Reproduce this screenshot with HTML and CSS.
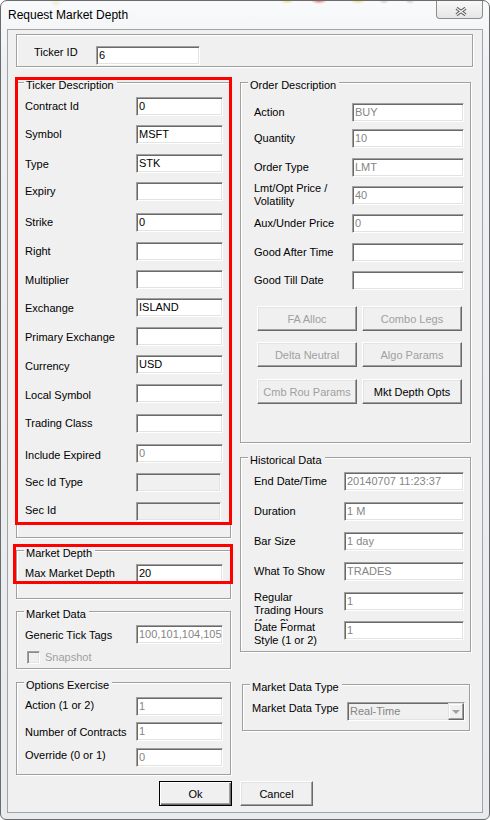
FILE: index.html
```html
<!DOCTYPE html>
<html lang="en">
<head>
<meta charset="utf-8">
<title>Request Market Depth</title>
<link rel="stylesheet" href="styles.css">
</head>
<body>
<div class="window">
  <div class="titlebar">
    <span class="title">Request Market Depth</span>
    <div class="close">
      <svg width="12" height="9" viewBox="0 0 12 9">
        <path d="M1.5 1.2 L10.5 7.8 M10.5 1.2 L1.5 7.8" stroke="#555" stroke-width="3.2" fill="none"/>
        <path d="M1.5 1.2 L10.5 7.8 M10.5 1.2 L1.5 7.8" stroke="#fafafa" stroke-width="1.3" fill="none"/>
      </svg>
    </div>
  </div>
  <div class="client">
    <div class="top-box">
      <span class="lbl-t">Ticker ID</span>
      <div class="tb tb-tid">6</div>
    </div>
    <div class="columns">
      <div class="col col-left">
        <div class="group g-td">
          <div class="gtitle">Ticker Description</div>
          <div class="fields f-td">
            <span class="lbl">Contract Id</span><div class="tb">0</div>
            <span class="lbl">Symbol</span><div class="tb">MSFT</div>
            <span class="lbl o1">Type</span><div class="tb">STK</div>
            <span class="lbl">Expiry</span><div class="tb"></div>
            <span class="lbl">Strike</span><div class="tb">0</div>
            <span class="lbl">Right</span><div class="tb"></div>
            <span class="lbl o1">Multiplier</span><div class="tb"></div>
            <span class="lbl o1">Exchange</span><div class="tb">ISLAND</div>
            <span class="lbl o1">Primary Exchange</span><div class="tb"></div>
            <span class="lbl o2">Currency</span><div class="tb">USD</div>
            <span class="lbl o2">Local Symbol</span><div class="tb"></div>
            <span class="lbl">Trading Class</span><div class="tb"></div>
            <span class="lbl o2">Include Expired</span><div class="tb ro">0</div>
            <span class="lbl">Sec Id Type</span><div class="tb dis narrow"></div>
            <span class="lbl om1">Sec Id</span><div class="tb dis narrow"></div>
          </div>
          <div class="mark mark-td"></div>
        </div>

        <div class="group g-md">
          <div class="gtitle">Market Depth</div>
          <div class="row r-md">
            <span class="lbl lw">Max Market Depth</span><div class="tb">20</div>
          </div>
          <div class="mark mark-md"></div>
        </div>

        <div class="group g-mda">
          <div class="gtitle">Market Data</div>
          <div class="row r-mda">
            <span class="lbl lw o1">Generic Tick Tags</span><div class="tb ro">100,101,104,105</div>
          </div>
          <div class="chk-row">
            <span class="chk"></span><span class="chk-lbl">Snapshot</span>
          </div>
        </div>

        <div class="group g-oe">
          <div class="gtitle">Options Exercise</div>
          <div class="fields f-oe">
            <span class="lbl om1">Action (1 or 2)</span><div class="tb ro">1</div>
            <span class="lbl o1">Number of Contracts</span><div class="tb ro">1</div>
            <span class="lbl om2">Override (0 or 1)</span><div class="tb ro">0</div>
          </div>
        </div>
      </div>

      <div class="col col-right">
        <div class="group g-od">
          <div class="gtitle">Order Description</div>
          <div class="fields f-od">
            <span class="lbl">Action</span><div class="tb ro">BUY</div>
            <span class="lbl">Quantity</span><div class="tb ro">10</div>
            <span class="lbl">Order Type</span><div class="tb ro">LMT</div>
            <span class="lbl two lmt">Lmt/Opt Price /<br>Volatility</span><div class="tb ro">40</div>
            <span class="lbl">Aux/Under Price</span><div class="tb ro">0</div>
            <span class="lbl">Good After Time</span><div class="tb"></div>
            <span class="lbl">Good Till Date</span><div class="tb"></div>
          </div>
          <div class="btn-grid">
            <div class="btn dis">FA Alloc</div>
            <div class="btn dis">Combo Legs</div>
            <div class="btn dis">Delta Neutral</div>
            <div class="btn dis">Algo Params</div>
            <div class="btn dis">Cmb Rou Params</div>
            <div class="btn">Mkt Depth Opts</div>
          </div>
        </div>

        <div class="group g-hd">
          <div class="gtitle">Historical Data</div>
          <div class="fields f-hd">
            <span class="lbl">End Date/Time</span><div class="tb ro">20140707 11:23:37</div>
            <span class="lbl">Duration</span><div class="tb ro">1 M</div>
            <span class="lbl">Bar Size</span><div class="tb ro">1 day</div>
            <span class="lbl">What To Show</span><div class="tb ro">TRADES</div>
            <span class="lbl two rth">Regular<br>Trading Hours<br>(1 or 2)</span><div class="tb ro">1</div>
            <span class="lbl two dfs">Date Format<br>Style (1 or 2)</span><div class="tb ro">1</div>
          </div>
        </div>

        <div class="group g-mdt">
          <div class="gtitle">Market Data Type</div>
          <div class="row r-mdt">
            <span class="lbl lw-mdt">Market Data Type</span>
            <div class="combo">
              <span class="combo-val">Real-Time</span>
              <span class="combo-btn"><span class="tri"></span></span>
            </div>
          </div>
        </div>
      </div>
    </div>

    <div class="actions">
      <div class="btn def">Ok</div>
      <div class="btn">Cancel</div>
    </div>
  </div>
</div>
</body>
</html>
```

FILE: styles.css
```css
* { box-sizing: border-box; }
html, body { margin: 0; padding: 0; }
body {
  width: 490px;
  height: 820px;
  overflow: hidden;
  font-family: "Liberation Sans", Arial, sans-serif;
  font-size: 11px;
  color: #000;
  background: #ffffff;
}

/* window frame */
.window {
  width: 490px;
  height: 820px;
  border: 1px solid #6b6b6b;
  border-radius: 7px 7px 6px 6px;
  background: linear-gradient(#f9fafb, #eef1f4 60px, #e8ebee);
  display: flex;
  flex-direction: column;
  overflow: hidden;
}
.titlebar {
  flex: none;
  height: 28px;
  display: flex;
  align-items: center;
  padding-left: 7px;
  background:
    radial-gradient(7px 3px at 286px 0, rgba(236, 214, 90, 0.75), transparent),
    radial-gradient(8px 3px at 318px 0, rgba(228, 84, 84, 0.75), transparent),
    radial-gradient(8px 3px at 357px 0, rgba(236, 214, 90, 0.75), transparent),
    radial-gradient(5px 3px at 383px 0, rgba(160, 160, 160, 0.5), transparent),
    radial-gradient(5px 3px at 409px 0, rgba(160, 160, 160, 0.5), transparent),
    radial-gradient(6px 4px at 55px 2px, rgba(236, 220, 150, 0.45), transparent);
}
.title {
  font-size: 12px;
  line-height: 16px;
  color: #000;
}
.close {
  align-self: flex-start;
  margin-left: auto;
  margin-right: 6px;
  width: 47px;
  height: 18px;
  border: 1px solid #8d8d8d;
  border-top: 0;
  border-radius: 0 0 4px 4px;
  background: linear-gradient(#f8f8f8, #e6e6e6);
  display: flex;
  justify-content: center;
  align-items: flex-start;
  padding: 6px 0 0 2px;
}
.close svg { display: block; }

.client {
  flex: none;
  width: 476px;
  height: 784px;
  margin: 0 6px;
  border: 1px solid #a3a3a3;
  background: #f0f0f0;
  padding: 4px 0 0 8px;
}

/* group boxes */
.top-box, .group {
  border: 1px solid #a0a0a0;
  box-shadow: 1px 1px 0 #ffffff, inset 1px 1px 0 #ffffff;
}
.top-box {
  width: 457px;
  height: 33px;
  display: flex;
  align-items: flex-start;
  padding: 11px 0 0 17px;
}
.lbl-t {
  width: 62px;
  line-height: 13px;
}
.tb-tid { width: 104px; height: 20px; }

.columns {
  display: flex;
  align-items: flex-start;
  gap: 9px;
  margin-top: 15px;
}
.col { display: flex; flex-direction: column; }
.col-left { width: 215px; }
.col-right { width: 231px; }

.group { position: relative; }
.gtitle {
  width: max-content;
  margin: -4px 0 0 7px;
  padding: 0 3px 0 2px;
  line-height: 13px;
  background: #f0f0f0;
}

.g-td { height: 456px; }
.g-md { height: 49px; margin-top: 12px; }
.g-mda { height: 58px; margin-top: 12px; }
.g-oe { height: 93px; margin-top: 13px; }
.g-od { height: 361px; }
.g-hd { height: 195px; margin-top: 14px; }
.g-mdt { height: 47px; margin-top: 32px; margin-left: 2px; width: 228px; }

/* field grids */
.fields {
  display: grid;
  align-items: start;
}
.f-td {
  margin: 5px 0 0 8px;
  grid-template-columns: 111px 87px;
  grid-template-rows: 28px 29px 28px 31px 29px 28px 28px 29px 28px 29px 30px 30px 29px 29px 19px;
}
.f-oe {
  margin: 5px 0 0 8px;
  grid-template-columns: 111px 87px;
  grid-template-rows: 25px 26px 19px;
}
.f-od {
  margin: 11px 0 0 13px;
  grid-template-columns: 98px 112px;
  grid-template-rows: 26px 29px 28px 28px 29px 28px 19px;
}
.f-hd {
  margin: 5px 0 0 13px;
  grid-template-columns: 90px 120px;
  grid-template-rows: 30px 30px 30px 30px 29px 19px;
}

.row { display: flex; align-items: flex-start; }
.r-md { margin: 4px 0 0 8px; }
.r-mda { margin: 4px 0 0 8px; }
.r-mdt { margin: 8px 0 0 9px; }
.lw { width: 111px; flex: none; }
.lw-mdt { width: 95px; flex: none; margin-top: -3px; }
.r-md .tb, .r-mda .tb { width: 87px; }

.lbl {
  height: 19px;
  line-height: 19px;
  white-space: nowrap;
}
.lbl.two { line-height: 13px; height: auto; }
.lbl.lmt { margin-top: -4px; }
.lbl.rth { height: 30px; overflow: hidden; margin-top: -1px; }
.lbl.dfs { margin-top: 0; }
.o1 { margin-top: 1px; }
.o2 { margin-top: 2px; }
.om1 { margin-top: -1px; }
.om2 { margin-top: -2px; }

/* text boxes */
.tb {
  height: 19px;
  border: 1px solid;
  border-color: #a0a0a0 #ffffff #ffffff #a0a0a0;
  box-shadow: inset 1px 1px 0 #696969, inset -1px -1px 0 #e3e3e3;
  background: #ffffff;
  padding-left: 2px;
  line-height: 17px;
  white-space: nowrap;
  overflow: hidden;
  color: #000;
}
.tb.ro { color: #858585; }
.tb.dis { background: #f0f0f0; }
.tb.narrow { width: 85px; }

/* red highlight annotations */
.mark {
  position: absolute;
  border: 3px solid #ff0000;
}
.mark-td { left: -2px; top: -6px; width: 217px; height: 448px; }
.mark-md { left: -4px; top: -7px; width: 220px; height: 40px; }

/* checkbox */
.chk-row {
  display: flex;
  align-items: center;
  margin: 5px 0 0 10px;
}
.chk {
  width: 13px;
  height: 13px;
  border: 1px solid;
  border-color: #a0a0a0 #ffffff #ffffff #a0a0a0;
  box-shadow: inset 1px 1px 0 #8a8a8a, inset -1px -1px 0 #e3e3e3;
  background: #f0f0f0;
}
.chk-lbl {
  margin: 1px 0 0 5px;
  line-height: 13px;
  color: #a0a0a0;
}

/* buttons */
.btn {
  height: 25px;
  border: 1px solid;
  border-color: #ffffff #696969 #696969 #ffffff;
  box-shadow: inset -1px -1px 0 #a0a0a0, inset 1px 1px 0 #e3e3e3;
  background: #f0f0f0;
  display: flex;
  align-items: center;
  justify-content: center;
  white-space: nowrap;
  color: #000;
}
.btn.dis { color: #a0a0a0; }
.btn.def {
  border: 1px solid #000000;
  box-shadow: inset 1px 1px 0 #ffffff, inset -1px -1px 0 #696969, inset -2px -2px 0 #a0a0a0;
}
.btn-grid {
  display: grid;
  grid-template-columns: 100px 100px;
  grid-template-rows: 36px 37px 25px;
  column-gap: 5px;
  align-items: start;
  margin: 16px 0 0 16px;
}

/* combo */
.combo {
  width: 118px;
  height: 19px;
  display: flex;
  border: 1px solid;
  border-color: #a0a0a0 #ffffff #ffffff #a0a0a0;
  box-shadow: inset 1px 1px 0 #696969, inset -1px -1px 0 #e3e3e3;
  background: #f0f0f0;
}
.combo-val {
  flex: 1;
  padding: 0 0 0 2px;
  line-height: 17px;
  color: #858585;
}
.combo-btn {
  width: 16px;
  height: 17px;
  border: 1px solid;
  border-color: #e3e3e3 #696969 #696969 #e3e3e3;
  box-shadow: inset -1px -1px 0 #a0a0a0, inset 1px 1px 0 #ffffff;
  background: #f0f0f0;
  display: flex;
  align-items: center;
  justify-content: center;
}
.tri {
  width: 0;
  height: 0;
  border-left: 4px solid transparent;
  border-right: 4px solid transparent;
  border-top: 4px solid #a0a0a0;
}

/* bottom buttons */
.actions {
  display: flex;
  gap: 8px;
  margin: 6px 0 0 143px;
}
.actions .btn { width: 73px; }
```
